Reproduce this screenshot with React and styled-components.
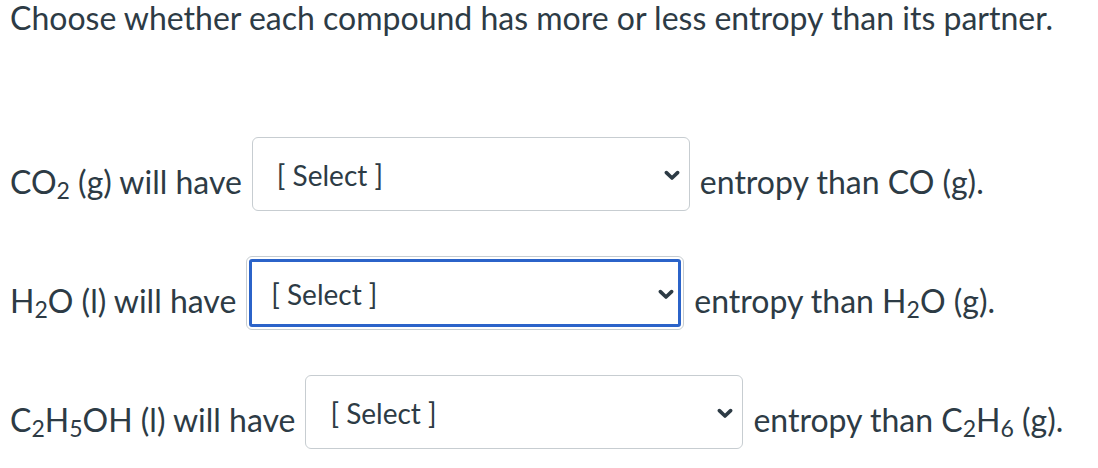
import styled, { createGlobalStyle } from "styled-components";

const GlobalStyle = createGlobalStyle`
  body {
    margin: 0;
    background: #fff;
    color: #2d3b45;
    font-family: Lato, "Open Sans", sans-serif;
  }
`;

const rows = [
  { before: ["CO", ["2"], " (g) will have"], after: ["entropy than CO (g)."] },
  { before: ["H", ["2"], "O (l) will have"], after: ["entropy than H", ["2"], "O (g)."], focused: true },
  { before: ["C", ["2"], "H", ["5"], "OH (l) will have"], after: ["entropy than C", ["2"], "H", ["6"], " (g)."] },
];

const Chem = ({ parts }) =>
  parts.map((p, i) => (Array.isArray(p) ? <Sub key={i}>{p[0]}</Sub> : <span key={i}>{p}</span>));

const Chevron = () => (
  <svg width="16" height="11" viewBox="0 0 16 11">
    <path d="M2.4 2.6 L8 8 L13.6 2.6" fill="none" stroke="#2d3b45" strokeWidth="3.6" strokeLinecap="round" strokeLinejoin="round" />
  </svg>
);

const App = () => {
  return (
    <Page>
      <GlobalStyle />
      <Heading>Choose whether each compound has more or less entropy than its partner.</Heading>
      <List>
        {rows.map((r, i) => (
          <Row key={i}>
            <Label>
              <Chem parts={r.before} />
            </Label>
            <Dropdown focused={r.focused}>
              <span>[ Select ]</span>
              <Chevron />
            </Dropdown>
            <Label>
              <Chem parts={r.after} />
            </Label>
          </Row>
        ))}
      </List>
    </Page>
  );
};

const Page = styled.div`
  padding: 0 10px;
`;

const Heading = styled.p`
  margin: 0;
  font-size: 32px;
  line-height: 36px;
`;

const List = styled.div`
  display: flex;
  flex-direction: column;
  gap: 45px;
  padding-top: 101px;
`;

const Row = styled.div`
  display: flex;
  align-items: center;
  gap: 10px;
`;

const Label = styled.span`
  font-size: 32px;
  line-height: 40px;
  padding-top: 16px;
  white-space: nowrap;
`;

const Sub = styled.sub`
  font-size: 0.72em;
  line-height: 0;
  vertical-align: -0.22em;
`;

const Dropdown = styled.div`
  box-sizing: border-box;
  width: 438px;
  height: 74px;
  border: 1px solid #c7cdd1;
  border-radius: 6px;
  display: flex;
  align-items: center;
  justify-content: space-between;
  padding: 2px 9px 0 24px;
  font-size: 28px;
  outline: ${(p) => (p.focused ? "3px solid #2b63c9" : "none")};
  outline-offset: -6px;
`;

export default App;
